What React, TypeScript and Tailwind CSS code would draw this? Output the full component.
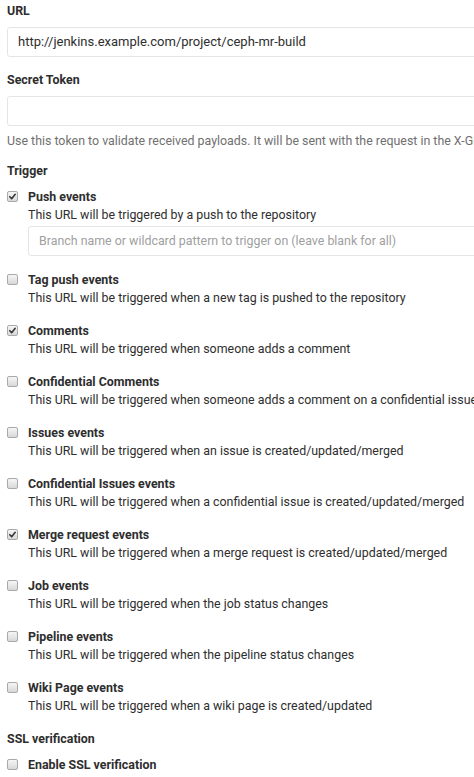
import React from "react";

interface Trigger {
  title: string;
  desc: string;
  checked: boolean;
  branch?: boolean;
}

const triggers: Trigger[] = [
  { title: "Push events", desc: "This URL will be triggered by a push to the repository", checked: true, branch: true },
  { title: "Tag push events", desc: "This URL will be triggered when a new tag is pushed to the repository", checked: false },
  { title: "Comments", desc: "This URL will be triggered when someone adds a comment", checked: true },
  { title: "Confidential Comments", desc: "This URL will be triggered when someone adds a comment on a confidential issue", checked: false },
  { title: "Issues events", desc: "This URL will be triggered when an issue is created/updated/merged", checked: false },
  { title: "Confidential Issues events", desc: "This URL will be triggered when a confidential issue is created/updated/merged", checked: false },
  { title: "Merge request events", desc: "This URL will be triggered when a merge request is created/updated/merged", checked: true },
  { title: "Job events", desc: "This URL will be triggered when the job status changes", checked: false },
  { title: "Pipeline events", desc: "This URL will be triggered when the pipeline status changes", checked: false },
  { title: "Wiki Page events", desc: "This URL will be triggered when a wiki page is created/updated", checked: false },
];

function Check({ checked }: { checked: boolean }) {
  return (
    <span className="flex h-[11px] w-[11px] shrink-0 items-center justify-center rounded-[2px] border border-[#a9a9a9] bg-gradient-to-b from-[#f6f6f6] to-[#d8d8d8]">
      {checked && (
        <svg width="9" height="9" viewBox="0 0 10 10">
          <path d="M2 5.2 L4.1 7.4 L8 2.6" fill="none" stroke="#333" strokeWidth="1.7" strokeLinecap="round" strokeLinejoin="round" />
        </svg>
      )}
    </span>
  );
}

export default function App() {
  return (
    <div className="h-[777px] w-[474px] overflow-hidden bg-white pl-[7px] pt-[2px] text-[12.4px] text-[#2e2e2e] [font-family:Roboto,'Liberation_Sans',sans-serif]">
      {/* URL */}
      <div className="font-bold leading-[18px]">URL</div>
      <div className="mt-[7px] flex h-[30px] w-[520px] items-center whitespace-nowrap rounded-[3px] border border-[#e5e5e5] px-[10px] text-[13px]">
        http://jenkins.example.com/project/ceph-mr-build
      </div>

      {/* Secret token */}
      <div className="mt-[14px] font-bold leading-[18px]">Secret Token</div>
      <div className="mt-[7px] h-[30px] w-[520px] rounded-[3px] border border-[#e5e5e5]"></div>
      <div className="mt-[6px] w-[467px] overflow-hidden whitespace-nowrap leading-[18px] text-[#707070]">
        Use this token to validate received payloads. It will be sent with the request in the X-Gitlab-Token HTTP header.
      </div>

      {/* Trigger */}
      <div className="mt-[12px] font-bold leading-[18px]">Trigger</div>
      <div className="mt-[7px] flex flex-col gap-[14px]">
        {triggers.map((t) => (
          <div key={t.title} className="flex">
            <div className="flex h-[19px] w-[21px] shrink-0 items-center">
              <Check checked={t.checked} />
            </div>
            <div className="flex min-w-0 flex-col">
              <div className="font-bold leading-[19px]">{t.title}</div>
              <div className="w-[446px] overflow-hidden whitespace-nowrap leading-[18px]">{t.desc}</div>
              {t.branch && (
                <div className="mt-[2px] flex h-[30px] w-[500px] items-center whitespace-nowrap rounded-[3px] border border-[#e5e5e5] px-[10px] text-[#a0a0a0]">
                  Branch name or wildcard pattern to trigger on (leave blank for all)
                </div>
              )}
            </div>
          </div>
        ))}
      </div>

      {/* SSL */}
      <div className="mt-[15px] font-bold leading-[18px]">SSL verification</div>
      <div className="mt-[7px] flex">
        <div className="flex h-[19px] w-[21px] shrink-0 items-center">
          <Check checked={false} />
        </div>
        <div className="font-bold leading-[19px]">Enable SSL verification</div>
      </div>
    </div>
  );
}
